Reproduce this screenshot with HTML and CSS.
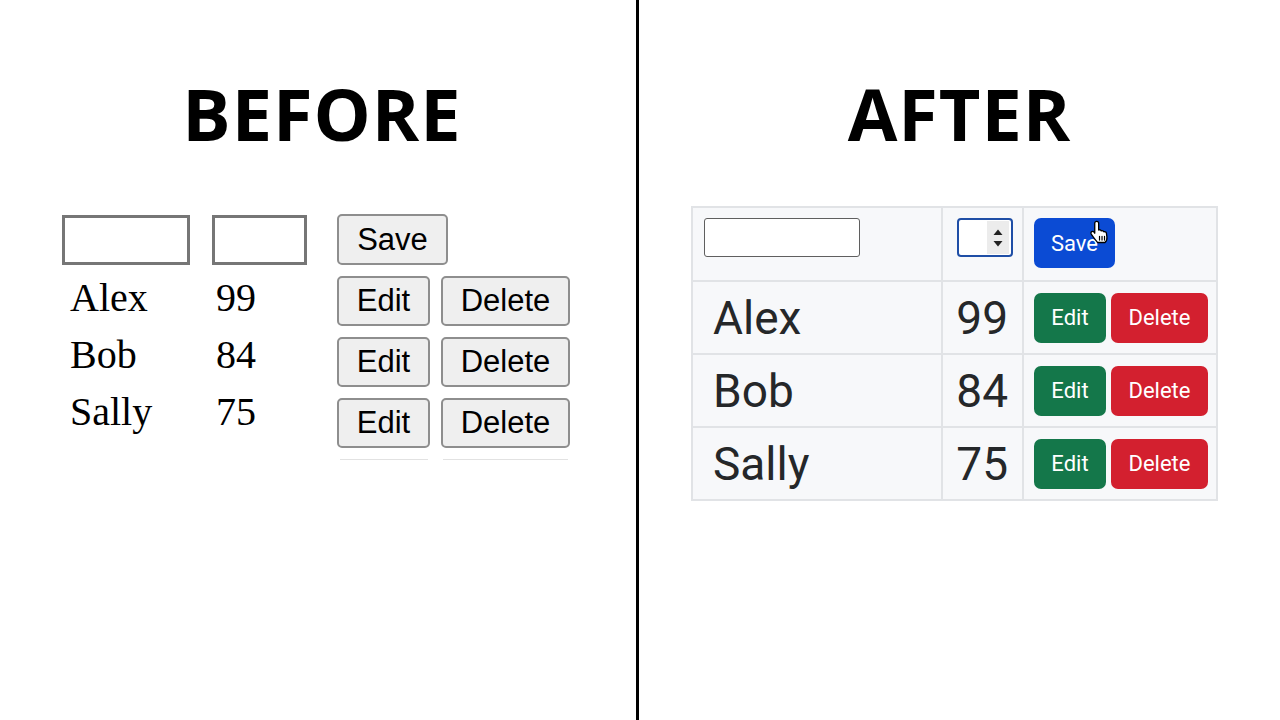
FILE: index.html
```html
<!DOCTYPE html>
<html lang="en">
<head>
<meta charset="utf-8">
<title>Before / After</title>
<link rel="stylesheet" href="styles.css">
</head>
<body>
<div class="page">
  <section class="half before">
    <h1 class="title title-before">BEFORE</h1>
    <div class="plain">
      <div class="pcol c1">
        <input class="pinput pinput-name" type="text">
        <div class="ptext pname">Alex</div>
        <div class="ptext pname">Bob</div>
        <div class="ptext pname">Sally</div>
      </div>
      <div class="pcol c2">
        <input class="pinput pinput-score" type="text">
        <div class="ptext pnum">99</div>
        <div class="ptext pnum">84</div>
        <div class="ptext pnum">75</div>
      </div>
      <div class="pcol c3">
        <div class="pbtns"><button class="pbtn pbtn-save">Save</button></div>
        <div class="pbtns"><button class="pbtn pbtn-edit">Edit</button><button class="pbtn pbtn-del">Delete</button></div>
        <div class="pbtns"><button class="pbtn pbtn-edit">Edit</button><button class="pbtn pbtn-del">Delete</button></div>
        <div class="pbtns"><button class="pbtn pbtn-edit">Edit</button><button class="pbtn pbtn-del">Delete</button></div>
        <div class="ghost-row">
          <span class="ghost ghost-a"></span>
          <span class="ghost ghost-b"></span>
        </div>
      </div>
    </div>
  </section>

  <div class="divider"></div>

  <section class="half after">
    <h1 class="title">AFTER</h1>
    <div class="table-wrap">
      <table class="grid">
        <colgroup>
          <col class="col-name">
          <col class="col-score">
          <col class="col-actions">
        </colgroup>
        <tr class="head-row">
          <td class="cell cell-input"><input class="text-input" type="text"></td>
          <td class="cell cell-num-input">
            <div class="num-input">
              <div class="spinner">
                <svg width="12" height="30" viewBox="0 0 12 30" aria-hidden="true">
                  <path d="M1.5 12 L6 6.5 L10.5 12 Z" fill="#222"/>
                  <path d="M1.5 18 L6 23.5 L10.5 18 Z" fill="#222"/>
                </svg>
              </div>
            </div>
          </td>
          <td class="cell cell-actions-head">
            <div class="save-wrap">
              <button class="btn btn-save">Save</button>
              <svg class="cursor" width="23" height="25" viewBox="0 0 21 23" aria-hidden="true">
                <path d="M7 1.2 c1 0 1.8 .8 1.8 1.8 V9.2 c.9 -.4 2 -.1 2.4 .8 c.9 -.4 2 -.1 2.4 .9 c.9 -.4 2 0 2.3 1 l.5 3.6 c.3 2.2 -.5 4 -1.8 5.2 H7.9 c-1.1 -1.3 -2.8 -3.1 -4 -4.9 L2 12.9 c-.5 -.9 -.3 -1.8 .5 -2.2 c.8 -.4 1.7 -.2 2.2 .6 L5.2 12.2 V3 C5.2 2 6 1.2 7 1.2 Z" fill="#fff" stroke="#000" stroke-width="1.2" stroke-linejoin="round"/>
                <path d="M9.6 15 V18.5 M11.9 15 V18.5 M14.2 15 V18.5" stroke="#000" stroke-width="1.1" stroke-linecap="round"/>
              </svg>
            </div>
          </td>
        </tr>
        <tr class="body-row">
          <td class="cell cell-name">Alex</td>
          <td class="cell cell-score">99</td>
          <td class="cell cell-actions"><div class="actions"><button class="btn btn-edit">Edit</button><button class="btn btn-del">Delete</button></div></td>
        </tr>
        <tr class="body-row">
          <td class="cell cell-name">Bob</td>
          <td class="cell cell-score">84</td>
          <td class="cell cell-actions"><div class="actions"><button class="btn btn-edit">Edit</button><button class="btn btn-del">Delete</button></div></td>
        </tr>
        <tr class="body-row">
          <td class="cell cell-name">Sally</td>
          <td class="cell cell-score">75</td>
          <td class="cell cell-actions"><div class="actions"><button class="btn btn-edit">Edit</button><button class="btn btn-del">Delete</button></div></td>
        </tr>
      </table>
    </div>
  </section>
</div>
</body>
</html>
```

FILE: styles.css
```css
* { box-sizing: border-box; }

html, body {
  margin: 0;
  padding: 0;
  background: #ffffff;
}

body {
  width: 1280px;
  height: 720px;
  overflow: hidden;
  font-family: "Liberation Sans", Arial, sans-serif;
}

.page {
  display: flex;
  width: 1280px;
  height: 720px;
}

.half {
  display: flex;
  flex-direction: column;
}

.before {
  width: 636px;
  flex: 0 0 636px;
}

.after {
  flex: 1 1 auto;
}

.divider {
  width: 3px;
  flex: 0 0 3px;
  background: #000;
}

.title {
  margin: 0;
  padding-top: 77px;
  font-family: "Open Sans", "Liberation Sans", sans-serif;
  font-weight: 700;
  font-size: 72px;
  line-height: 73px;
  letter-spacing: 1px;
  text-align: center;
  color: #000;
}

.title-before {
  padding-left: 8px;
}

/* ---------- BEFORE (plain HTML) ---------- */
.plain {
  margin-top: 64px;
  padding-left: 62px;
  display: flex;
  align-items: flex-start;
}

.pcol {
  display: flex;
  flex-direction: column;
}

.c1 { width: 150px; flex: 0 0 150px; margin-top: 1px; }
.c2 { width: 125px; flex: 0 0 125px; margin-top: 1px; }
.c3 { gap: 11px; }

.pinput {
  height: 50px;
  border: 3px solid #767676;
  border-radius: 0;
  background: #fff;
  padding: 0;
  margin: 0 0 4px 0;
  outline: none;
}

.pinput-name { width: 128px; }
.pinput-score { width: 95px; }

.ptext {
  font-family: "Liberation Serif", "Times New Roman", serif;
  font-size: 40px;
  line-height: 57px;
  height: 57px;
  color: #000;
}

.pname { padding-left: 8px; }
.pnum { padding-left: 4px; }

.pbtns {
  display: flex;
  gap: 11px;
}

.pbtn {
  height: 50px;
  margin: 0;
  padding: 0;
  border: 2px solid #8e8e8e;
  border-radius: 5px;
  background: #efefef;
  font-family: "Liberation Sans", Arial, sans-serif;
  font-size: 31px;
  color: #000;
  text-align: center;
}

.pbtn-save { width: 111px; height: 51px; }
.pbtn-edit { width: 93px; }
.pbtn-del { width: 129px; }

.ghost-row {
  display: flex;
  height: 1px;
}

.ghost {
  display: block;
  height: 1px;
  background: #e2e2e2;
}

.ghost-a { margin-left: 3px; width: 88px; }
.ghost-b { margin-left: 15px; width: 125px; }

/* ---------- AFTER (bootstrap-like) ---------- */
.table-wrap {
  margin-top: 56px;
  margin-left: 52px;
}

.grid {
  border-collapse: collapse;
  table-layout: fixed;
  width: 525px;
  background: #f7f8fa;
  font-family: Roboto, "Liberation Sans", sans-serif;
  color: #252729;
}

.col-name { width: 250px; }
.col-score { width: 81px; }
.col-actions { width: 194px; }

.cell {
  border: 2px solid #e1e3e6;
  padding: 0;
}

.head-row { height: 74px; }
.body-row { height: 73px; }

.head-row .cell {
  vertical-align: top;
  padding-top: 10px;
}

.cell-input { padding-left: 11px; }

.text-input {
  display: block;
  width: 156px;
  height: 39px;
  margin: 0;
  padding: 0 8px;
  border: 1px solid #5f5f5f;
  border-radius: 3px;
  background: #fff;
  outline: none;
}

.cell-num-input {
  padding-left: 14px;
}

.num-input {
  width: 56px;
  height: 39px;
  border: 2px solid #1f4ea6;
  border-radius: 4px;
  background: #fff;
  display: flex;
  justify-content: flex-end;
  align-items: center;
  padding-right: 2px;
}

.spinner {
  width: 22px;
  height: 33px;
  background: #ececec;
  display: flex;
  align-items: center;
  justify-content: center;
}

.cell-actions-head { padding-left: 10px; }

.save-wrap {
  position: relative;
  width: 81px;
  height: 50px;
}

.cursor {
  position: absolute;
  left: 55px;
  top: 2px;
}

.btn {
  height: 50px;
  margin: 0;
  padding: 0;
  border: none;
  border-radius: 7px;
  font-family: Roboto, "Liberation Sans", sans-serif;
  font-size: 22px;
  color: #fff;
  text-align: center;
}

.btn-save {
  width: 81px;
  background: #0b4bd4;
}

.btn-edit {
  width: 72px;
  background: #14774a;
}

.btn-del {
  width: 97px;
  background: #d3202f;
}

.cell-name {
  font-size: 46px;
  padding-left: 20px;
  vertical-align: middle;
}

.cell-score {
  font-size: 46px;
  text-align: right;
  padding-right: 14px;
  vertical-align: middle;
}

.cell-actions {
  padding-left: 10px;
  vertical-align: middle;
}

.actions {
  display: flex;
  gap: 5px;
}
```
